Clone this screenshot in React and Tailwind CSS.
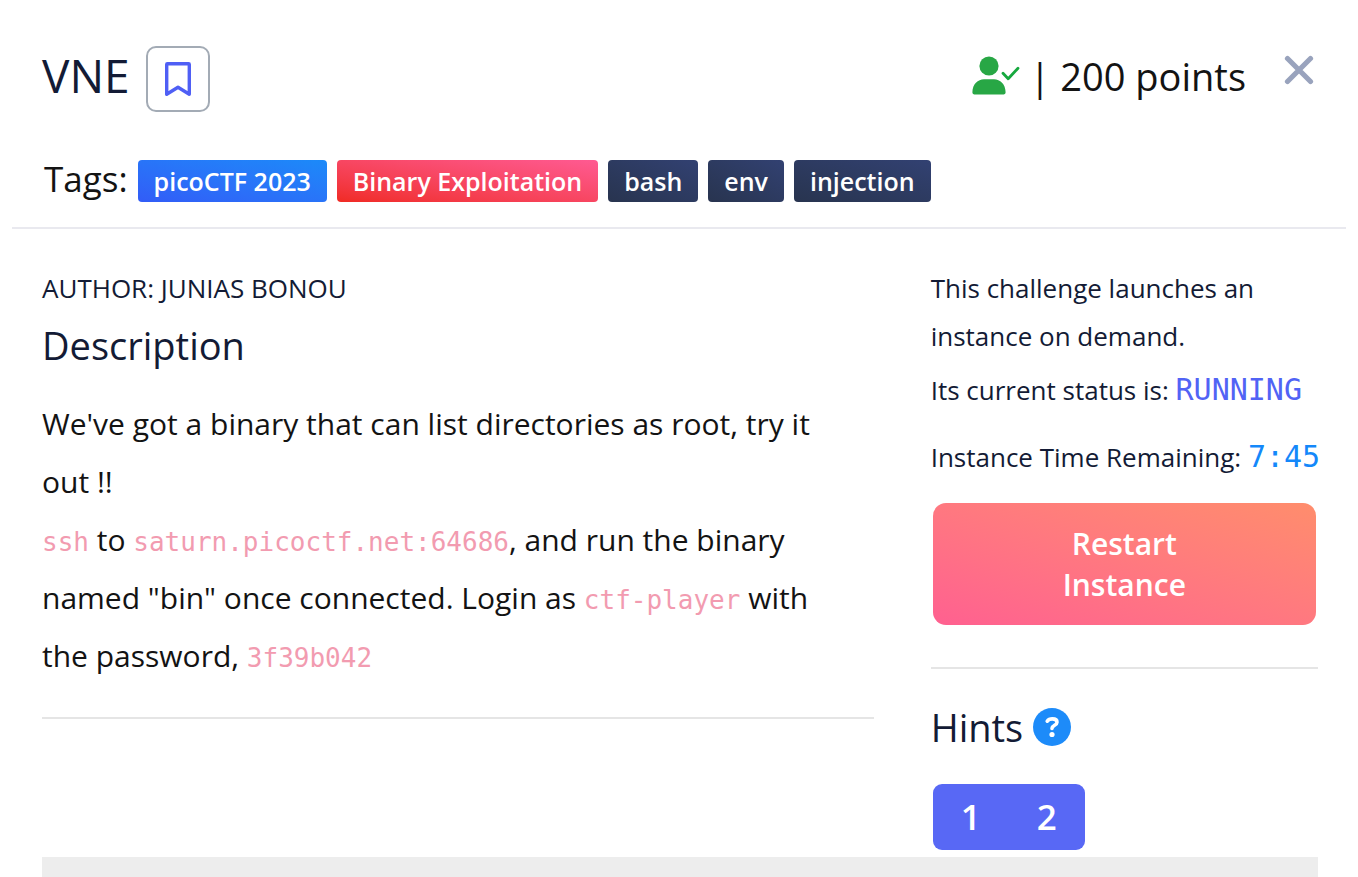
const tags = [
  { label: 'picoCTF 2023', tone: 'from-[#325cf7] to-[#1b8af9]' },
  { label: 'Binary Exploitation', tone: 'from-[#f02a22] to-[#ff5a92]' },
  { label: 'bash', tone: 'from-[#28344f] to-[#324172]' },
  { label: 'env', tone: 'from-[#28344f] to-[#324172]' },
  { label: 'injection', tone: 'from-[#28344f] to-[#324172]' },
];

function Code({ children }) {
  return (
    <code className="font-['DejaVu_Sans_Mono',monospace] text-[26px] leading-none text-[#f29bb0]">{children}</code>
  );
}

function BookmarkIcon() {
  return (
    <svg width="26" height="34" viewBox="0 0 26 34" fill="none" stroke="#4f5ff5" strokeWidth="3.4" strokeLinejoin="round">
      <path d="M2.400 1.700h21.200q.7 0 .7.700v29.900L13 25.200 1.700 32.300V2.400q0-.7.7-.7z" />
    </svg>
  );
}

function SolvedIcon() {
  return (
    <svg width="48" height="40" viewBox="0 0 48 40" role="img" aria-label="Solved">
      <circle cx="17" cy="10" r="9.600" fill="#28a745" />
      <path d="M0.400 36.300C0.400 28 6 23.200 12 23.200h10c6 0 11.600 4.800 11.600 13.100 0 1.300-.8 2.100-2 2.100H2.400c-1.200 0-2-.8-2-2.100z" fill="#28a745" />
      <path d="M31 17.200l5.200 5.500L46 12.300" fill="none" stroke="#16a83e" strokeWidth="2.800" strokeLinecap="round" strokeLinejoin="round" />
    </svg>
  );
}

export default function App() {
  return (
    <main className="min-h-screen bg-white font-['Open_Sans',sans-serif] text-[#131313]">
      <header className="mx-3 border-b-2 border-[#e9e9ef] pt-[46px] pr-8 pb-[25px] pl-[30px]">
        <div className="flex items-start justify-between">
          <div className="flex items-start gap-4">
            <h1 className="text-[46px] leading-[58px] text-[#131b35]">VNE</h1>
            <button type="button" aria-label="Bookmark" className="flex h-[66px] w-16 items-center justify-center rounded-[10px] border-2 border-[#a3abb5]">
              <BookmarkIcon />
            </button>
          </div>
          <div className="flex items-start gap-[38px]">
            <div className="flex items-center gap-[10px] pt-1 text-[38px] leading-[52px]">
              <SolvedIcon />
              <span>| 200 points</span>
            </div>
            <button type="button" aria-label="Close" className="mt-[9px]">
              <svg width="30" height="30" viewBox="0 0 30 30" stroke="#99a3bd" strokeWidth="5.200" strokeLinecap="round">
                <path d="M3.500 3.500l23 23M26.500 3.500l-23 23" />
              </svg>
            </button>
          </div>
        </div>
        <div className="mt-12 flex items-start gap-[10px] pl-[2px]">
          <span className="text-[35px] leading-[38px]">Tags:</span>
          {tags.map((tag) => (
            <span key={tag.label} className={`rounded-[4px] bg-linear-to-tr px-4 text-[25px] leading-[42px] font-semibold text-white ${tag.tone}`}>
              {tag.label}
            </span>
          ))}
        </div>
      </header>

      <div className="pr-10 pl-[42px]">
        <div className="grid grid-cols-3 gap-[57px] pt-[35px] pb-[7px]">
          <section className="col-span-2">
            <p className="text-[26px] leading-[48px] text-[#131b35]">AUTHOR: JUNIAS BONOU</p>
            <h2 className="mt-[7px] text-[38px] leading-[52px] text-[#131b35]">Description</h2>
            <div className="mt-6 border-b-2 border-[#e5e5e5] pr-5 pb-8">
              <p className="text-[30px] leading-[58px]">
                We've got a binary that can list directories as root, try it out !!
                <br />
                <Code>ssh</Code> to <Code>saturn.picoctf.net:64686</Code>, and run the binary named "bin" once connected. Login as{' '}
                <Code>ctf-player</Code> with the password, <Code>3f39b042</Code>
              </p>
            </div>
          </section>

          <aside>
            <p className="text-[26px] leading-[48px] text-[#131b35]">This challenge launches an instance on demand.</p>
            <p className="text-[26px] leading-[60px] whitespace-nowrap text-[#131b35]">
              Its current status is: <span className="font-['DejaVu_Sans_Mono',monospace] text-[30px] leading-none text-[#5163f5]">RUNNING</span>
            </p>
            <p className="mt-[7px] text-[26px] leading-[60px] whitespace-nowrap text-[#131b35]">
              Instance Time Remaining: <span className="font-['DejaVu_Sans_Mono',monospace] text-[30px] leading-none text-[#1488fa]">7:45</span>
            </p>
            <div className="border-b-2 border-[#e5e5e5] px-[2px] pt-4 pb-[42px]">
              <button type="button" className="w-full rounded-[13px] bg-linear-to-tr from-[#ff6090] to-[#ff8d6c] px-[120px] py-5 text-[30px] leading-[41px] font-semibold text-white">
                Restart Instance
              </button>
            </div>
            <div className="mt-8 flex items-center gap-[10px]">
              <h2 className="text-[38px] leading-[52px] text-[#131b35]">Hints</h2>
              <button type="button" aria-label="About hints">
                <svg width="38" height="38" viewBox="0 0 38 38">
                  <circle cx="19" cy="19" r="19" fill="#1d8bf9" />
                  <path d="M14.200 13.200c1.200-1.800 2.600-2.300 5.200-2.300 2.900 0 4.600 1.200 4.600 3.300 0 3.300-4.800 2.900-5 6.200" fill="none" stroke="#fff" strokeWidth="3.600" strokeLinecap="round" strokeLinejoin="round" />
                  <circle cx="19" cy="26.500" r="2.600" fill="#fff" />
                </svg>
              </button>
            </div>
            <div className="mt-[31px] ml-[2px] flex w-fit overflow-hidden rounded-[9px] bg-[#5868f5] text-[35px] leading-[66px] font-semibold text-white">
              <button type="button" className="w-[76px]">1</button>
              <button type="button" className="w-[76px]">2</button>
            </div>
          </aside>
        </div>
        <div className="h-5 bg-[#ededed]" />
      </div>
    </main>
  );
}
